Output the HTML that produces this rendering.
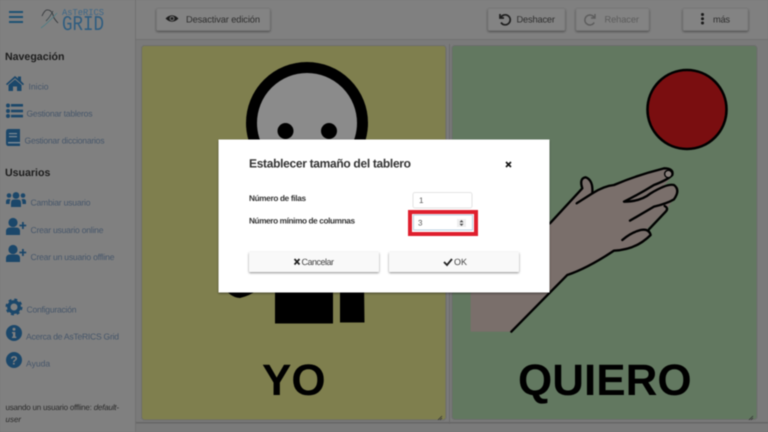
<!DOCTYPE html>
<html lang="es"><head><meta charset="utf-8"><title>AsTeRICS Grid</title>
<style>
html,body{margin:0;padding:0;width:768px;height:432px;overflow:hidden;background:#777}
svg{display:block;font-family:"Liberation Sans",sans-serif;filter:blur(.4px);text-rendering:geometricPrecision}
.nav{font-size:8.6px;fill:#46566a}
.h{font-size:10.6px;font-weight:bold;fill:#1c1c1c}
.tb{font-size:9.3px;fill:#2e2e2e}
.i{fill:#1b476a}
.lb{font-size:8.2px;fill:#333}
</style></head><body>
<svg width="768" height="432" viewBox="0 0 768 432" xmlns="http://www.w3.org/2000/svg">
<defs>
<filter id="s" x="-10%" y="-20%" width="120%" height="150%"><feDropShadow dx="0" dy="1" stdDeviation="1" flood-color="#000" flood-opacity=".45"/></filter>
</defs>
<rect width="768" height="432" fill="#7a7a7a"/>
<rect width="135" height="432" fill="#808080"/>
<rect x="135" width="633" height="40" fill="#808080"/>
<rect x="135" y="39" width="633" height="1" fill="#717171"/>
<rect x="135" width="1" height="432" fill="#707070"/>
<rect x="136" y="422" width="632" height="1.5" fill="#666"/>

<!-- Sidebar logo -->
<g fill="#1f5273"><rect x="9" y="11" width="14" height="2"/><rect x="9" y="16" width="14" height="2"/><rect x="9" y="21" width="14" height="2"/></g>
<path d="M42 16 Q45 9 48 10 Q52 10 54 18 Q56 21 58 23" fill="none" stroke="#2b2f33" stroke-width=".8"/>
<path d="M41 28 Q49 22 57 13" fill="none" stroke="#4a7d86" stroke-width=".8"/>
<path d="M53 11 Q50 17 46 21" fill="none" stroke="#2b3a40" stroke-width=".7"/>
<text x="62" y="15" font-family="Liberation Mono,monospace" font-size="9" fill="#3c6788" textLength="42" lengthAdjust="spacingAndGlyphs">AsTeRICS</text>
<text x="62" y="30" font-family="Liberation Mono,monospace" font-size="21" fill="#2f5d80" textLength="42" lengthAdjust="spacingAndGlyphs">GRID</text>

<!-- Sidebar text -->
<text x="5" y="60" class="h">Navegación</text>
<text x="28.5" y="89.5" class="nav">Inicio</text>
<text x="26.5" y="116.5" class="nav" textLength="66">Gestionar tableros</text>
<text x="24.5" y="143.5" class="nav" textLength="80">Gestionar diccionarios</text>
<text x="5" y="176" class="h">Usuarios</text>
<text x="30.5" y="205.5" class="nav" textLength="60">Cambiar usuario</text>
<text x="30.5" y="233" class="nav" textLength="73">Crear usuario online</text>
<text x="30.5" y="260" class="nav" textLength="84">Crear un usuario offline</text>
<text x="26.5" y="312.5" class="nav" textLength="50">Configuración</text>
<text x="26" y="339.5" class="nav" textLength="93">Acerca de AsTeRICS Grid</text>
<text x="26" y="366.5" class="nav">Ayuda</text>
<text x="5.5" y="410" font-size="8" fill="#2a2a2a" textLength="113.5">usando un usuario offline: <tspan font-style="italic">default-</tspan></text>
<text x="5.5" y="422" font-size="8" font-style="italic" fill="#2a2a2a">user</text>

<!-- Sidebar icons -->
<path class="i" d="M6 84 L15 76 L18 78.5 V76.5 H21 V81 L24 84 L23 85.2 L15 78.3 L7 85.2Z M8.5 85 L15 79.5 L21.5 85 V91 H17 V86.5 H13 V91 H8.5Z"/>
<g class="i"><circle cx="8" cy="105.5" r="2"/><circle cx="8" cy="111" r="2"/><circle cx="8" cy="116" r="2"/><rect x="11" y="104" width="12" height="2.6"/><rect x="11" y="109.7" width="12" height="2.6"/><rect x="11" y="114.8" width="12" height="2.6"/></g>
<path class="i" d="M8.5 129 H20 V146 H8.5 Q6 146 6 143 V132 Q6 129 8.5 129Z"/>
<g fill="#7d8b96"><rect x="9" y="133" width="8" height="1.2"/><rect x="9" y="136" width="8" height="1.2"/><rect x="8" y="142" width="12" height="1.4"/></g>
<g class="i"><circle cx="16" cy="195.5" r="3.4"/><circle cx="9" cy="195.5" r="2.3"/><circle cx="23" cy="195.5" r="2.3"/><path d="M11 207 V203 Q11 199.5 14 199.5 H18 Q21 199.5 21 203 V207Z M6 204 V201.5 Q6 199 9 199 L10.5 199.5 Q9.5 201 9.6 204Z M26 204 V201.5 Q26 199 23 199 L21.5 199.5 Q22.5 201 22.4 204Z"/></g>
<g class="i"><circle cx="13" cy="222.5" r="4.6"/><path d="M6 235 V231.5 Q6 227.5 10 227.5 H16.5 Q20 227.5 20 231.5 V235Z"/><path d="M22 222 h1.8 v2.6 h2.4 v1.8 h-2.4 v2.6 h-1.8 v-2.6 h-2.6 v-1.8 h2.6z"/></g>
<g class="i" transform="translate(0,27)"><circle cx="13" cy="222.5" r="4.6"/><path d="M6 235 V231.5 Q6 227.5 10 227.5 H16.5 Q20 227.5 20 231.5 V235Z"/><path d="M22 222 h1.8 v2.6 h2.4 v1.8 h-2.4 v2.6 h-1.8 v-2.6 h-2.6 v-1.8 h2.6z"/></g>
<circle cx="14" cy="307" r="5.2" fill="none" stroke="#1b476a" stroke-width="3.4"/>
<circle cx="14" cy="307" r="7.5" fill="none" stroke="#1b476a" stroke-width="2" stroke-dasharray="3 2.9"/>
<circle class="i" cx="14" cy="333" r="8"/>
<g fill="#808080"><circle cx="14" cy="329.3" r="1.5"/><path d="M12 332 H15.3 V336.6 H16.3 V338 H12 V336.6 H13 V333.4 H12Z"/></g>
<circle class="i" cx="14" cy="360" r="8"/>
<text x="14" y="364.3" font-size="12" font-weight="bold" text-anchor="middle" fill="#808080">?</text>

<!-- Top buttons -->
<g filter="url(#s)" fill="#838383" stroke="#757575" stroke-width=".6">
<rect x="156.5" y="8.5" width="113.5" height="22" rx="1.5"/>
<rect x="488" y="8.5" width="77" height="22" rx="1.5"/>
<rect x="576" y="8.5" width="73" height="22" rx="1.5"/>
<rect x="683" y="8.5" width="65" height="22" rx="1.5"/>
</g>
<text x="186" y="22.5" class="tb" textLength="74">Desactivar edición</text>
<text x="516.5" y="22.5" class="tb" textLength="38.5">Deshacer</text>
<text x="604.5" y="22.5" class="tb" style="fill:#5c5c5c" textLength="34.5">Rehacer</text>
<text x="713" y="22.5" class="tb" textLength="17">más</text>
<path d="M165.5 18.5 Q172 12 178.5 18.5 Q172 25 165.5 18.5Z" fill="#1c1c1c"/><circle cx="172" cy="18.5" r="2.6" fill="#666"/><circle cx="172" cy="18.5" r="1.3" fill="#1c1c1c"/>
<path d="M500 14 V18 H504 M500.8 17.5 A5 5 0 1 1 501 22.5" fill="none" stroke="#1f1f1f" stroke-width="1.7"/>
<path d="M595 14 V18 H591 M594.2 17.5 A5 5 0 1 0 594.2 22.5" fill="none" stroke="#5c5c5c" stroke-width="1.4"/>
<g fill="#1a1a1a"><circle cx="702.5" cy="14.5" r="1.5"/><circle cx="702.5" cy="18.7" r="1.5"/><circle cx="702.5" cy="23" r="1.5"/></g>

<!-- Yellow tile -->
<rect x="141.5" y="45.5" width="304.5" height="374.5" rx="3" fill="#7f7f4e" stroke="#6d6d6d"/>
<circle cx="307" cy="123" r="55.5" fill="#8b8b8b" stroke="#000" stroke-width="11"/>
<circle cx="285.5" cy="131" r="8" fill="#000"/><circle cx="329" cy="131" r="8" fill="#000"/>
<path d="M224 280 H264 Q258 294 240 298 Q228 297 224 285Z" fill="#000"/>
<path d="M275 280 H333 V323.5 H275Z M340 280 H364 L364.5 322.5 H340Z" fill="#000"/>
<text x="262" y="395" font-size="44" font-weight="bold" fill="#000">YO</text>
<path d="M442 416 L438 420 M442 418 L440 420" stroke="#333" stroke-width=".8"/>

<!-- Green tile -->
<rect x="452" y="45.5" width="305" height="374" rx="3" fill="#627860" stroke="#6d6d6d"/>
<circle cx="687" cy="109.5" r="39.5" fill="#7a0e10" stroke="#000" stroke-width="2.6"/>
<g transform="translate(454,160) scale(.3333)">
<path d="M50 515 H172 L340 345 Q400 325 480 272 Q545 270 590 225 L580 205 L640 145 L670 100 Q680 75 655 72 L625 80 Q655 55 655 35 Q640 18 600 30 L480 75 L415 100 Q415 60 392 50 Q378 55 385 85 L288 190 L50 400Z" fill="#7a6f6b"/>
<g fill="none" stroke="#000" stroke-width="7" stroke-linecap="round" stroke-linejoin="round">
<path d="M172 515 L340 345 Q400 325 480 272 Q545 270 590 225 Q585 205 560 210 Q530 218 505 240"/>
<path d="M288 190 L385 85 Q375 55 395 52 Q418 60 415 100 L368 130"/>
<path d="M415 100 Q450 78 480 75 Q550 45 630 25 Q660 25 655 45 Q640 60 600 75 Q560 100 510 125 Q560 125 590 100 Q640 70 660 75 Q680 90 660 118 Q640 130 600 140 L528 182"/>
<path d="M632 138 Q645 145 635 155 L585 208"/>
</g>
<circle cx="643" cy="42" r="11" fill="#8a817d" stroke="#000" stroke-width="4"/>
</g>
<text x="518" y="395" font-size="44" font-weight="bold" fill="#000">QUIERO</text>
<path d="M753 416 L749 420 M753 418 L751 420" stroke="#333" stroke-width=".8"/>
<rect x="449" y="44" width="1" height="380" fill="#6a6a6a"/>

<!-- Modal -->
<rect x="218.5" y="139.5" width="331" height="153" fill="#fff" filter="url(#s)"/>
<text x="249" y="167.5" font-size="12" font-weight="bold" fill="#333" textLength="162">Establecer tamaño del tablero</text>
<path d="M506 162 L511 167 M511 162 L506 167" stroke="#111" stroke-width="1.6"/>
<text x="249" y="201" class="lb" font-weight="bold" textLength="57">Número de filas</text>
<text x="249" y="223.5" class="lb" font-weight="bold" textLength="106">Número mínimo de columnas</text>
<rect x="413" y="192.5" width="59" height="15.5" rx="2" fill="#fff" stroke="#e4e4e4"/>
<text x="419" y="203" font-size="8" fill="#555">1</text>
<rect x="410" y="212" width="66" height="22" fill="#fff" stroke="#df1f2e" stroke-width="4"/>
<rect x="413.5" y="215" width="59" height="15" fill="#fff" stroke="#b9cfe0"/>
<text x="418" y="225.5" font-size="8" fill="#555">3</text>
<rect x="457" y="219" width="9" height="8" fill="#eee"/>
<path d="M459.5 222.3 L461.5 220 L463.5 222.3Z M459.5 223.7 L461.5 226 L463.5 223.7Z" fill="#444"/>
<g filter="url(#s)" fill="#f9f9f9"><rect x="249" y="252" width="130" height="20" rx="1"/><rect x="389" y="252" width="130" height="20" rx="1"/></g>
<path d="M294.5 259 L299.5 264.5 M299.5 259 L294.5 264.5" stroke="#222" stroke-width="1.7"/>
<text x="301.5" y="265" font-size="9" fill="#444" textLength="32.5">Cancelar</text>
<path d="M444 262 L447 265 L452 259" fill="none" stroke="#222" stroke-width="1.8"/>
<text x="454" y="265" font-size="9" fill="#444">OK</text>
</svg>
</body></html>
